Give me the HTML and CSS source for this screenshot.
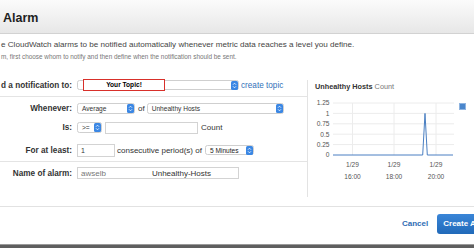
FILE: index.html
```html
<!DOCTYPE html>
<html>
<head>
<meta charset="utf-8">
<title>Alarm</title>
<link rel="stylesheet" href="styles.css">
</head>
<body>
<div class="dialog">
  <div class="header"><h1 class="title">Alarm</h1></div>
  <div class="intro">
    <p class="lead">e CloudWatch alarms to be notified automatically whenever metric data reaches a level you define.</p>
    <p class="hint">m, first choose whom to notify and then define when the notification should be sent.</p>
  </div>
  <div class="main">
    <div class="form">
      <div class="row r1">
        <span class="lbl">d a notification to:</span>
        <div class="ctrl">
          <div class="select sel-topic">
            <span class="topic">Your Topic!</span>
            <svg class="arrow" viewBox="0 0 7 9" width="7" height="9"><rect width="7" height="9" rx="1.5" fill="#3b87e4"/><path d="M2 3.7 3.5 2.2 5 3.7M2 5.3 3.5 6.8 5 5.3" fill="none" stroke="#fff" stroke-width=".8"/></svg>
          </div>
          <a class="link">create topic</a>
        </div>
      </div>
      <div class="row r2">
        <span class="lbl">Whenever:</span>
        <div class="ctrl">
          <div class="select sel-avg">
            <span>Average</span>
            <svg class="arrow" viewBox="0 0 7 9" width="7" height="9"><rect width="7" height="9" rx="1.5" fill="#3b87e4"/><path d="M2 3.7 3.5 2.2 5 3.7M2 5.3 3.5 6.8 5 5.3" fill="none" stroke="#fff" stroke-width=".8"/></svg>
          </div>
          <span class="txt of">of</span>
          <div class="select sel-metric">
            <span>Unhealthy Hosts</span>
            <svg class="arrow" viewBox="0 0 7 9" width="7" height="9"><rect width="7" height="9" rx="1.5" fill="#3b87e4"/><path d="M2 3.7 3.5 2.2 5 3.7M2 5.3 3.5 6.8 5 5.3" fill="none" stroke="#fff" stroke-width=".8"/></svg>
          </div>
        </div>
      </div>
      <div class="row r3">
        <span class="lbl">Is:</span>
        <div class="ctrl">
          <div class="select sel-op">
            <span>&gt;=</span>
            <svg class="arrow" viewBox="0 0 7 9" width="7" height="9"><rect width="7" height="9" rx="1.5" fill="#3b87e4"/><path d="M2 3.7 3.5 2.2 5 3.7M2 5.3 3.5 6.8 5 5.3" fill="none" stroke="#fff" stroke-width=".8"/></svg>
          </div>
          <div class="input in-threshold"></div>
          <span class="txt count">Count</span>
        </div>
      </div>
      <div class="row r4">
        <span class="lbl">For at least:</span>
        <div class="ctrl">
          <div class="input in-periods"><span>1</span></div>
          <span class="txt consec">consecutive period(s) of</span>
          <div class="select sel-period">
            <span>5 Minutes</span>
            <svg class="arrow" viewBox="0 0 7 9" width="7" height="9"><rect width="7" height="9" rx="1.5" fill="#3b87e4"/><path d="M2 3.7 3.5 2.2 5 3.7M2 5.3 3.5 6.8 5 5.3" fill="none" stroke="#fff" stroke-width=".8"/></svg>
          </div>
        </div>
      </div>
      <div class="row r5">
        <span class="lbl">Name of alarm:</span>
        <div class="ctrl">
          <div class="input in-name"><span class="prefix">awselb</span><span class="name">Unhealthy-Hosts</span></div>
        </div>
      </div>
    </div>
    <div class="chart">
      <div class="chart-title"><b>Unhealthy Hosts</b> <span>Count</span></div>
      <svg class="plot" viewBox="0 0 166 103" width="166" height="103">
        <g stroke="#ececec" stroke-width="1">
          <line x1="25" y1="9" x2="146" y2="9"/>
          <line x1="25" y1="19.4" x2="146" y2="19.4"/>
          <line x1="25" y1="29.8" x2="146" y2="29.8"/>
          <line x1="25" y1="40.2" x2="146" y2="40.2"/>
          <line x1="25" y1="50.6" x2="146" y2="50.6"/>
          <line x1="44.5" y1="9" x2="44.5" y2="61"/>
          <line x1="86" y1="9" x2="86" y2="61"/>
          <line x1="128" y1="9" x2="128" y2="61"/>
        </g>
        <g font-family="Liberation Sans, Arial, sans-serif" font-size="6.6" fill="#555" text-anchor="end">
          <text x="21.5" y="11.3">1.25</text>
          <text x="21.5" y="21.7">1</text>
          <text x="21.5" y="32.1">0.75</text>
          <text x="21.5" y="42.5">0.5</text>
          <text x="21.5" y="52.9">0.25</text>
          <text x="21.5" y="63.3">0</text>
        </g>
        <g font-family="Liberation Sans, Arial, sans-serif" font-size="6.6" fill="#555" text-anchor="middle">
          <text x="44.5" y="73.4">1/29</text>
          <text x="86" y="73.4">1/29</text>
          <text x="128" y="73.4">1/29</text>
          <text x="44.5" y="85.4">16:00</text>
          <text x="86" y="85.4">18:00</text>
          <text x="128" y="85.4">20:00</text>
        </g>
        <polyline points="25,61 114.7,61 117,19.4 119.3,61 145,61" fill="none" stroke="#4a7fc2" stroke-width="1"/>
        <rect x="151.5" y="9.5" width="6" height="6" fill="#4a86cc" stroke="#8fb4e0" stroke-width="1"/>
      </svg>
    </div>
  </div>
  <div class="footer">
    <a class="cancel">Cancel</a>
    <a class="create">Create Alarm</a>
  </div>
  <div class="taskbar"></div>
</div>
</body>
</html>
```

FILE: styles.css
```css
* {
  box-sizing: border-box;
  margin: 0;
  padding: 0;
}

html,
body {
  overflow: hidden;
}

body {
  width: 474px;
  height: 248px;
  background: #fff;
  font-family: "Liberation Sans", Arial, sans-serif;
  color: #333;
}

.dialog {
  width: 474px;
  height: 248px;
  display: flex;
  flex-direction: column;
}

.header {
  height: 34px;
  flex: none;
  background: linear-gradient(#fbfbfb, #e7e7e7);
  border-bottom: 1px solid #d2d2d2;
  padding: 11px 0 0 3px;
}

.title {
  font-size: 12.5px;
  line-height: 14px;
  font-weight: bold;
  color: #1f1f1f;
}

.intro {
  padding: 5px 0 0 1px;
  flex: none;
  height: 29px;
}

.lead {
  font-size: 8.1px;
  line-height: 11px;
  color: #444;
  white-space: nowrap;
}

.hint {
  font-size: 6.4px;
  line-height: 10px;
  margin-top: 2px;
  color: #777;
  white-space: nowrap;
}

.main {
  display: flex;
  margin-top: 11px;
  height: 123px;
  flex: none;
}

.form {
  width: 307px;
  flex: none;
}

.row {
  display: grid;
  grid-template-columns: 72px auto;
  column-gap: 5px;
  align-items: center;
}

.r1 {
  height: 23px;
  border-bottom: 1px solid #e4e4e4;
}

.r2 {
  height: 22px;
}

.r3 {
  height: 17px;
}

.r4 {
  height: 26px;
  padding-top: 3px;
  border-bottom: 1px solid #e4e4e4;
}

.r5 {
  height: 22px;
}

.lbl {
  font-size: 8.2px;
  font-weight: bold;
  color: #333;
  text-align: right;
  white-space: nowrap;
}

.ctrl {
  display: flex;
  align-items: center;
  white-space: nowrap;
}

.select {
  height: 11px;
  border: 1px solid #cfcfcf;
  border-radius: 2.5px;
  background: #fff;
  display: flex;
  align-items: center;
  justify-content: space-between;
  padding-left: 4px;
  font-size: 6.6px;
  color: #333;
  flex: none;
}

.arrow {
  display: block;
  flex: none;
}

.sel-topic {
  width: 162px;
  height: 10px;
  padding-left: 5px;
}

.topic {
  width: 82px;
  height: 12px;
  border: 1.5px solid #d8302a;
  background: #fff;
  color: #000;
  font-weight: bold;
  font-size: 6.6px;
  line-height: 9px;
  text-align: center;
}

.link {
  margin-left: 2px;
  font-size: 8.2px;
  color: #3371b9;
}

.sel-avg {
  width: 58px;
}

.txt {
  font-size: 8px;
  color: #333;
}

.of {
  margin-left: 3px;
}

.sel-metric {
  width: 137px;
  margin-left: 2px;
}

.sel-op {
  width: 25px;
}

.input {
  height: 12px;
  border: 1px solid #d3d3d3;
  background: #fff;
  display: flex;
  align-items: center;
  padding-left: 3px;
  font-size: 8px;
  color: #333;
  flex: none;
}

.in-threshold {
  width: 93px;
  margin-left: 3px;
}

.count {
  margin-left: 3px;
}

.in-periods {
  width: 38px;
  height: 13px;
  font-size: 7px;
}

.consec {
  margin-left: 2px;
}

.sel-period {
  width: 49px;
  height: 10px;
  margin-left: 3px;
  color: #222;
}

.in-name {
  width: 162px;
}

.prefix {
  color: #777;
}

.name {
  margin-left: 46px;
  color: #333;
}

.chart {
  width: 167px;
  height: 117px;
  margin-top: 6px;
  border-left: 1px solid #e3e3e3;
  flex: none;
}

.chart-title {
  height: 14px;
  line-height: 14px;
  padding-left: 7px;
  font-size: 7.3px;
  white-space: nowrap;
}

.chart-title b {
  color: #333;
}

.chart-title span {
  color: #777;
}

.plot {
  display: block;
}

.footer {
  height: 38px;
  margin-top: 9px;
  border-top: 1px solid #e2e2e2;
  padding: 7px 0 0 402px;
  display: flex;
  align-items: flex-start;
  flex: none;
  white-space: nowrap;
}

.cancel {
  font-size: 8px;
  line-height: 20px;
  font-weight: bold;
  color: #2e6db4;
}

.create {
  margin-left: 9px;
  height: 20px;
  padding: 0 6px;
  border-radius: 3px;
  background: linear-gradient(#3a85d7, #216ab9);
  color: #fff;
  font-size: 8px;
  line-height: 20px;
  font-weight: bold;
  flex: none;
}

.taskbar {
  height: 4px;
  flex: none;
  background: #5f5f5f;
  border-top: 1px solid #9a9a9a;
}
```
